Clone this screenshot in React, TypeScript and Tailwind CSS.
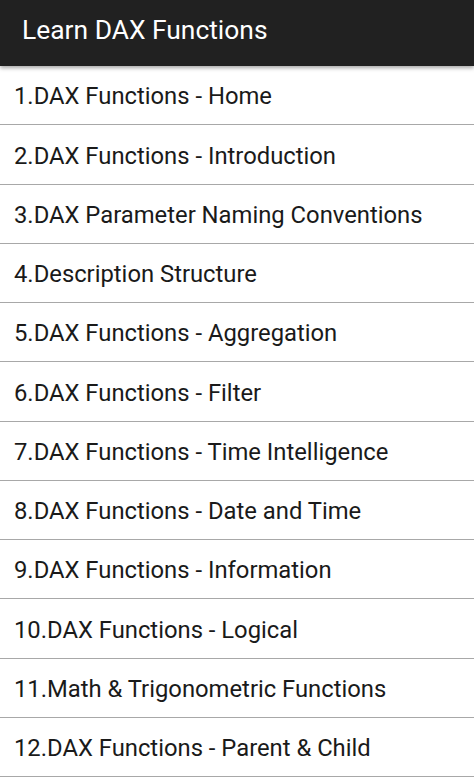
const ITEMS = [
  "1.DAX Functions - Home",
  "2.DAX Functions - Introduction",
  "3.DAX Parameter Naming Conventions",
  "4.Description Structure",
  "5.DAX Functions - Aggregation",
  "6.DAX Functions - Filter",
  "7.DAX Functions - Time Intelligence",
  "8.DAX Functions - Date and Time",
  "9.DAX Functions - Information",
  "10.DAX Functions - Logical",
  "11.Math & Trigonometric Functions",
  "12.DAX Functions - Parent & Child",
];

export default function App() {
  return (
    <div
      className="h-[784px] w-[474px] overflow-hidden bg-white"
      style={{ fontFamily: "Roboto, 'Liberation Sans', sans-serif" }}
    >
      <header className="relative z-10 flex h-[66px] items-center bg-[#212121] px-[22px] pb-[4px] shadow-[0_2px_4px_rgba(0,0,0,0.35)]">
        <h1 className="text-[26.4px] font-normal text-white">Learn DAX Functions</h1>
      </header>
      <ul>
        {ITEMS.map((item) => (
          <li
            key={item}
            className="flex h-[59.25px] items-center border-b border-[#a8a8a8] px-[14px] pt-[4px] text-[23.8px] text-[#1a1a1a]"
          >
            {item}
          </li>
        ))}
      </ul>
    </div>
  );
}
